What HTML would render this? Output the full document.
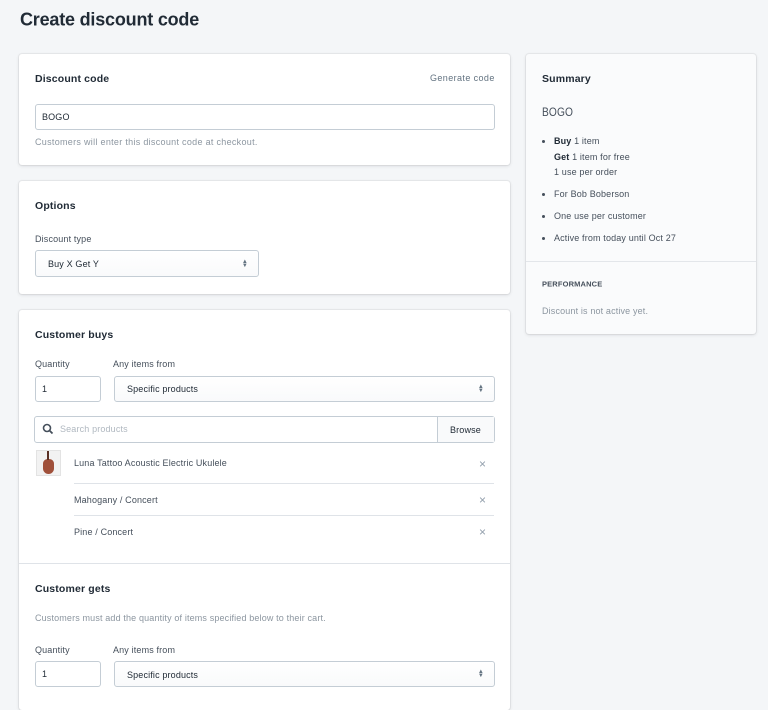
<!DOCTYPE html>
<html><head><style>
*{box-sizing:border-box;margin:0;padding:0}
html,body{height:687px}
body{width:768px;overflow:hidden;background:#f4f6f8;font-family:"Liberation Sans",sans-serif;color:#212b36;position:relative;font-size:9.5px;letter-spacing:.15px}
.a{position:absolute;white-space:nowrap}
.card{position:absolute;background:#fff;border-radius:3px;box-shadow:0 0 0 1px rgba(63,63,68,.06),0 1px 3px rgba(63,63,68,.15)}
.h{font-weight:bold;font-size:10.5px;color:#212b36}
.g{color:#637381}
.in{position:absolute;border:1px solid #c4cdd5;border-radius:3px;background:#fff}
.sel{background:linear-gradient(#fff,#f9fafb)}
.ar{position:absolute;right:10px;top:50%;transform:translateY(-50%);font-size:6px;line-height:4px;color:#637381}
.x{position:absolute;left:479px;color:#919eab;font-size:12px}
.ln{position:absolute;left:74px;width:420px;height:1px;background:#dfe3e8}
.t{position:absolute;transform:translateY(-50%);white-space:nowrap}
</style></head><body>
<div class="t" style="left:20px;top:20px;font-size:18px;font-weight:bold;color:#212b36;letter-spacing:-.2px">Create discount code</div>

<div class="card" style="left:19px;top:54px;width:491px;height:111px"></div>
<div class="t h" style="left:35px;top:79px">Discount code</div>
<div class="t g" style="left:430px;top:78px;font-size:9px;letter-spacing:.4px">Generate code</div>
<div class="in" style="left:35px;top:104px;width:460px;height:26px"></div>
<div class="t" style="left:42px;top:117px;font-size:9px">BOGO</div>
<div class="t g" style="left:35px;top:142px;font-size:9px;color:#8c96a0;letter-spacing:.3px">Customers will enter this discount code at checkout.</div>

<div class="card" style="left:19px;top:181px;width:491px;height:113px"></div>
<div class="t h" style="left:35px;top:206px">Options</div>
<div class="t" style="left:35px;top:239px;font-size:9px;color:#454f5b">Discount type</div>
<div class="in sel" style="left:35px;top:250px;width:224px;height:27px"><span class="ar">▲<br>▼</span></div>
<div class="t" style="left:48px;top:264px;font-size:9px">Buy X Get Y</div>

<div class="card" style="left:19px;top:310px;width:491px;height:400px"></div>
<div class="t h" style="left:35px;top:335px">Customer buys</div>
<div class="t" style="left:35px;top:364px;font-size:9px;color:#454f5b">Quantity</div>
<div class="t" style="left:113px;top:364px;font-size:9px;color:#454f5b">Any items from</div>
<div class="in" style="left:35px;top:376px;width:66px;height:26px"></div>
<div class="t" style="left:42px;top:389px;font-size:9px">1</div>
<div class="in sel" style="left:114px;top:376px;width:381px;height:26px"><span class="ar">▲<br>▼</span></div>
<div class="t" style="left:127px;top:389px;font-size:9px">Specific products</div>
<div class="in" style="left:34px;top:416px;width:461px;height:27px"></div>
<div style="position:absolute;left:437px;top:417px;width:57px;height:25px;border-left:1px solid #c4cdd5;background:#f9fafb"></div>
<div class="t" style="left:450px;top:430px;font-size:9px">Browse</div>
<svg class="a" style="left:42px;top:423px" width="12" height="12" viewBox="0 0 12 12"><circle cx="5" cy="5" r="3.5" fill="none" stroke="#454f5b" stroke-width="1.6"/><path d="M7.5 7.5L10.5 10.5" stroke="#454f5b" stroke-width="1.8"/></svg>
<div class="t" style="left:60px;top:429px;font-size:9px;color:#b0b8c0">Search products</div>
<div style="position:absolute;left:36px;top:450px;width:25px;height:26px;background:#f2f2f2;border:1px solid #e3e3e3"></div>
<div style="position:absolute;left:43px;top:459px;width:11px;height:15px;background:#a0503a;border-radius:5px 5px 6px 6px"></div>
<div style="position:absolute;left:47px;top:451px;width:2px;height:9px;background:#5a3024"></div>
<div class="t" style="left:74px;top:463px;font-size:9px;color:#454f5b">Luna Tattoo Acoustic Electric Ukulele</div>
<div class="t x" style="top:464px">×</div>
<div class="ln" style="top:483px"></div>
<div class="t" style="left:74px;top:500px;font-size:9px;color:#454f5b">Mahogany / Concert</div>
<div class="t x" style="top:500px">×</div>
<div class="ln" style="top:515px"></div>
<div class="t" style="left:74px;top:532px;font-size:9px;color:#454f5b">Pine / Concert</div>
<div class="t x" style="top:532px">×</div>
<div style="position:absolute;left:19px;top:563px;width:491px;height:1px;background:#dfe3e8"></div>
<div class="t h" style="left:35px;top:589px">Customer gets</div>
<div class="t" style="left:35px;top:618px;font-size:9px;color:#8c96a0">Customers must add the quantity of items specified below to their cart.</div>
<div class="t" style="left:35px;top:650px;font-size:9px;color:#454f5b">Quantity</div>
<div class="t" style="left:113px;top:650px;font-size:9px;color:#454f5b">Any items from</div>
<div class="in" style="left:35px;top:661px;width:66px;height:26px"></div>
<div class="t" style="left:42px;top:674px;font-size:9px">1</div>
<div class="in sel" style="left:114px;top:661px;width:381px;height:26px"><span class="ar">▲<br>▼</span></div>
<div class="t" style="left:127px;top:675px;font-size:9px">Specific products</div>

<div class="card" style="left:526px;top:54px;width:230px;height:280px;background:#fafbfc"></div>
<div style="position:absolute;left:526px;top:261px;width:230px;height:1px;background:#e3e6ea"></div>
<div class="t h" style="left:542px;top:79px">Summary</div>
<div class="t" style="left:542px;top:112px;font-size:12px;color:#454f5b;transform:translateY(-50%) scaleX(.85);transform-origin:left">BOGO</div>
<div class="t" style="left:554px;top:141px;font-size:9px;color:#454f5b"><b style="color:#212b36">Buy</b> 1 item</div>
<div class="t" style="left:554px;top:157px;font-size:9px;color:#454f5b"><b style="color:#212b36">Get</b> 1 item for free</div>
<div class="t" style="left:554px;top:172px;font-size:9px;color:#454f5b">1 use per order</div>
<div class="t" style="left:554px;top:194px;font-size:9px;color:#454f5b">For Bob Boberson</div>
<div class="t" style="left:554px;top:216px;font-size:9px;color:#454f5b">One use per customer</div>
<div class="t" style="left:554px;top:238px;font-size:9px;color:#454f5b">Active from today until Oct 27</div>
<div style="position:absolute;left:542px;top:140px;width:3px;height:3px;border-radius:50%;background:#454f5b"></div>
<div style="position:absolute;left:542px;top:193px;width:3px;height:3px;border-radius:50%;background:#454f5b"></div>
<div style="position:absolute;left:542px;top:215px;width:3px;height:3px;border-radius:50%;background:#454f5b"></div>
<div style="position:absolute;left:542px;top:237px;width:3px;height:3px;border-radius:50%;background:#454f5b"></div>
<div class="t" style="left:542px;top:284px;font-size:7.5px;font-weight:bold;color:#454f5b">PERFORMANCE</div>
<div class="t" style="left:542px;top:311px;font-size:9px;color:#8c96a0">Discount is not active yet.</div>
</body></html>
